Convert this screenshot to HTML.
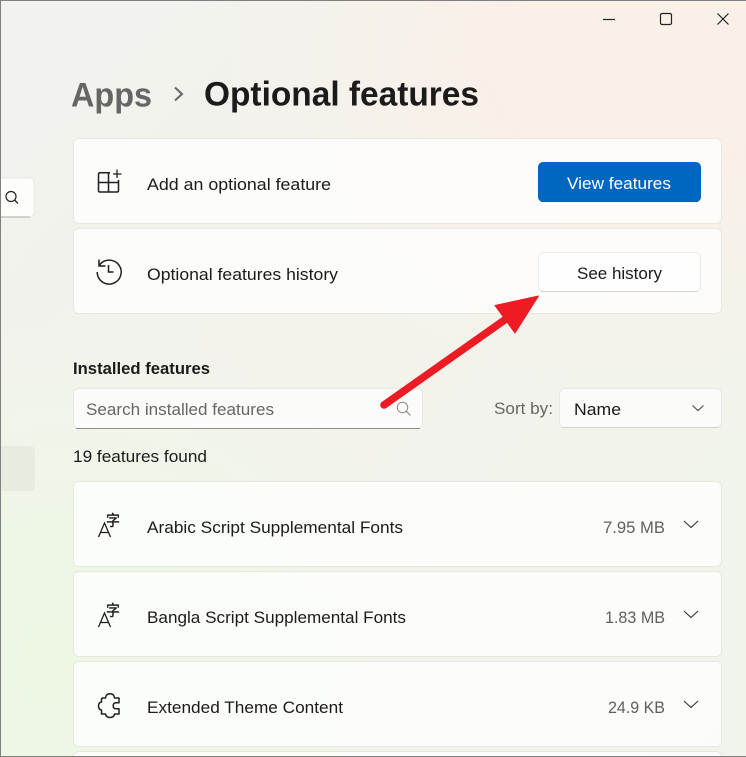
<!DOCTYPE html>
<html><head><meta charset="utf-8"><style>
html,body{margin:0;padding:0;width:746px;height:757px;overflow:hidden}
body{background:
radial-gradient(ellipse 420px 330px at 640px 60px,#f9f0e8 0%,#f9f0e8 30%,rgba(249,240,232,0) 100%),
radial-gradient(ellipse 380px 340px at 60px 660px,#edf7e4 0%,#eef7e6 35%,rgba(238,247,230,0) 100%),
linear-gradient(135deg,#f2f2ee 0%,#f3f3ec 50%,#f0f4ea 100%)}
svg{position:absolute;left:0;top:0;display:block}
text{font-family:"Liberation Sans","Noto Sans CJK SC",sans-serif;fill:#1b1b1b;font-size:17px}
.c{fill:rgba(255,255,255,.74);stroke:#e7e8e2;stroke-width:1}
.i{fill:none;stroke:#1f1f1f;stroke-width:1.5}
.z{font-family:"Noto Sans CJK SC",sans-serif;font-weight:400;stroke:#1b1b1b;stroke-width:.35}
</style></head><body>
<svg width="746" height="757" viewBox="0 0 746 757">
<!-- sidebar fragments -->
<path d="M0 178H29q5 0 5 5V212q0 5-5 5H0Z" fill="#fdfdfb" stroke="#e7e7e3"/>
<path d="M0 217H30" stroke="#a8a8a8" stroke-width="1"/>
<circle cx="11" cy="196.500" r="5" fill="none" stroke="#222" stroke-width="1.200"/>
<path d="M14.500 200L18 203.500" stroke="#222" stroke-width="1.300"/>
<path d="M0 446H30q5 0 5 5V486q0 5-5 5H0Z" fill="#000" fill-opacity=".035"/>

<!-- title -->
<text x="71" y="106.500" font-weight="bold" style="font-size:34px;fill:#666" textLength="81" lengthAdjust="spacingAndGlyphs">Apps</text>
<path d="M175 87.500L182 94L175 100.500" fill="none" stroke="#666" stroke-width="2"/>
<text x="204" y="105.500" style="font-size:34px;fill:#1b1b1b" font-weight="bold" textLength="275" lengthAdjust="spacingAndGlyphs">Optional features</text>

<!-- window controls -->
<path d="M603 19.500H615" stroke="#222" stroke-width="1.200"/>
<rect x="660.500" y="13.500" width="11" height="11" rx="1.500" fill="none" stroke="#222" stroke-width="1.200"/>
<path d="M717.500 13.500L728.500 24.500M728.500 13.500L717.500 24.500" stroke="#222" stroke-width="1.200"/>

<!-- card 1 -->
<rect class="c" x="73.500" y="138.500" width="648" height="85" rx="5"/>
<path class="i" d="M110 172.800H100q-1.500 0-1.500 1.500V190.500q0 1.500 1.500 1.500H117q1.500 0 1.500-1.500V180M98.500 182.500H118.500M108.500 172.800V192" stroke-linejoin="round"/>
<path d="M117 169.500V178M113 174H121.500" fill="none" stroke="#1f1f1f" stroke-width="1.300"/>
<text x="147" y="190" textLength="184" lengthAdjust="spacingAndGlyphs">Add an optional feature</text>
<rect x="538" y="162" width="163" height="40" rx="5" fill="#0067c0"/>
<path d="M541 201.500H698" stroke="#0a5ba8" stroke-width="1"/>
<text x="567" y="189" style="fill:#fff" textLength="104" lengthAdjust="spacingAndGlyphs">View features</text>

<!-- card 2 -->
<rect class="c" x="73.500" y="228.500" width="648" height="85" rx="5"/>
<path class="i" d="M99.500 265A12 12 0 1 1 97.200 272M99 259.500V266H105.500"/>
<path class="i" d="M108.500 265V272H113.500" stroke-width="1.400"/>
<text x="147" y="280" textLength="191" lengthAdjust="spacingAndGlyphs">Optional features history</text>
<rect x="538.500" y="252.500" width="162" height="39" rx="5" fill="#fefefe" stroke="#ebebe8"/>
<path d="M541 291.500H698" stroke="#d4d4d4" stroke-width="1"/>
<text x="577" y="279" textLength="85" lengthAdjust="spacingAndGlyphs">See history</text>

<!-- installed -->
<text x="73" y="374" font-weight="bold" style="font-size:16.500px" textLength="137" lengthAdjust="spacingAndGlyphs">Installed features</text>
<rect x="73.500" y="388.500" width="349" height="40" rx="5" fill="#fbfbf9" stroke="#e7e7e3"/>
<path d="M76 428.500H420" stroke="#8d8d8d" stroke-width="1"/>
<text x="86" y="415" style="fill:#666" textLength="188" lengthAdjust="spacingAndGlyphs">Search installed features</text>
<circle cx="402.500" cy="407.500" r="5.200" fill="none" stroke="#888" stroke-width="1"/>
<path d="M406.300 411.300L410.500 415.500" stroke="#888" stroke-width="1.100"/>
<text x="494" y="414" style="fill:#666" textLength="59" lengthAdjust="spacingAndGlyphs">Sort by:</text>
<rect x="559.500" y="388.500" width="162" height="39" rx="5" fill="#fbfbf9" stroke="#e7e7e3"/>
<path d="M562 427.500H719" stroke="#d2d2ce" stroke-width="1"/>
<text x="574" y="415" textLength="47" lengthAdjust="spacingAndGlyphs">Name</text>
<path d="M692.500 405.500L698 410.500L703.500 405.500" fill="none" stroke="#444" stroke-width="1.100"/>
<text x="73" y="462" textLength="134" lengthAdjust="spacingAndGlyphs">19 features found</text>

<!-- rows -->
<rect class="c" x="73.500" y="481.500" width="648" height="85" rx="5"/>
<rect class="c" x="73.500" y="571.500" width="648" height="85" rx="5"/>
<rect class="c" x="73.500" y="661.500" width="648" height="85" rx="5"/>
<rect class="c" x="73.500" y="751.500" width="648" height="20" rx="5"/>

<path d="M98.500 537L104.500 523L110.500 537M100.500 532.500H108.500" fill="none" stroke="#1f1f1f" stroke-width="1.300"/>
<text x="106" y="525.500" class="z" style="font-size:15px" textLength="14" lengthAdjust="spacingAndGlyphs">字</text>
<text x="147" y="533" textLength="256" lengthAdjust="spacingAndGlyphs">Arabic Script Supplemental Fonts</text>
<text x="603" y="533" style="fill:#5f5f5f" textLength="62" lengthAdjust="spacingAndGlyphs">7.95 MB</text>
<path d="M684 521L691 527.500L698 521" fill="none" stroke="#333" stroke-width="1.100"/>

<path d="M98.500 627L104.500 613L110.500 627M100.500 622.500H108.500" fill="none" stroke="#1f1f1f" stroke-width="1.300"/>
<text x="106" y="615.500" class="z" style="font-size:15px" textLength="14" lengthAdjust="spacingAndGlyphs">字</text>
<text x="147" y="623" textLength="259" lengthAdjust="spacingAndGlyphs">Bangla Script Supplemental Fonts</text>
<text x="605" y="623" style="fill:#5f5f5f" textLength="60" lengthAdjust="spacingAndGlyphs">1.83 MB</text>
<path d="M684 611L691 617.500L698 611" fill="none" stroke="#333" stroke-width="1.100"/>

<path class="i" d="M103 698H105.500Q106 693.800 110 693.800Q114 693.800 114.500 698H119V702.800H116Q113.200 702.800 113.200 705.800Q113.200 708.800 116 708.800H119V714H114.500Q114 717.500 110 717.500Q106 717.500 105.500 714H101.500V710Q98.500 709.500 98.500 706Q98.500 702.500 101.500 702V699.500Q101.500 698 103 698Z" stroke-linejoin="round"/>
<text x="147" y="713" textLength="196" lengthAdjust="spacingAndGlyphs">Extended Theme Content</text>
<text x="608" y="713" style="fill:#5f5f5f" textLength="57" lengthAdjust="spacingAndGlyphs">24.9 KB</text>
<path d="M684 701L691 707.500L698 701" fill="none" stroke="#333" stroke-width="1.100"/>

<!-- arrow -->
<path d="M384 405L506 319" stroke="#ed1c24" stroke-width="7.500" stroke-linecap="round"/>
<path d="M538.500 296L495 305.500L515 333Z" fill="#ed1c24" stroke="#ed1c24" stroke-width="1" stroke-linejoin="round"/>

<!-- window border -->
<path d="M.5 757V.5H746M0 756.500H746" fill="none" stroke="#808080" stroke-width="1"/>
</svg>
</body></html>
